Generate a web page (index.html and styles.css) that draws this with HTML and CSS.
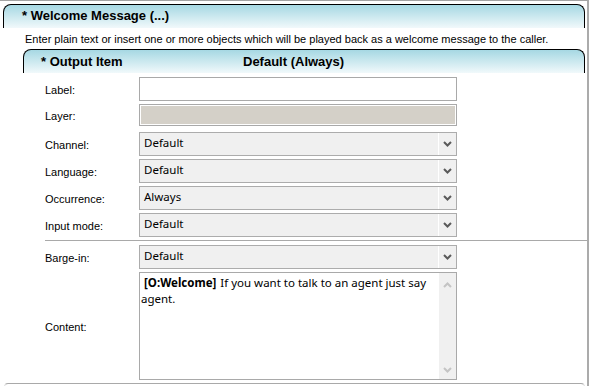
FILE: index.html
```html
<!DOCTYPE html>
<html>
<head>
<meta charset="utf-8">
<link rel="stylesheet" href="styles.css">
</head>
<body>
<div class="page">
  <div class="section">
    <div class="sec-head">* Welcome Message (...)</div>
    <div class="sec-desc">Enter plain text or insert one or more objects which will be played back as a welcome message to the caller.</div>
    <div class="panel">
      <div class="panel-head"><span class="ph-title">* Output Item</span><span>Default (Always)</span></div>
      <div class="form">
        <div class="row r24 gap3"><span class="lbl">Label:</span><div class="field text-input"></div></div>
        <div class="row r22 gap6"><span class="lbl">Layer:</span><div class="field layer-input"><div class="layer-fill"></div></div></div>
        <div class="row r24 gap3"><span class="lbl">Channel:</span><div class="field select"><span class="sel-val">Default</span><span class="sel-btn"><svg width="9" height="6" viewBox="0 0 9 6"><path d="M1 1 L4.5 4.5 L8 1" fill="none" stroke="#5a5a5a" stroke-width="2"/></svg></span></div></div>
        <div class="row r24 gap3"><span class="lbl">Language:</span><div class="field select"><span class="sel-val">Default</span><span class="sel-btn"><svg width="9" height="6" viewBox="0 0 9 6"><path d="M1 1 L4.5 4.5 L8 1" fill="none" stroke="#5a5a5a" stroke-width="2"/></svg></span></div></div>
        <div class="row r24 gap3"><span class="lbl">Occurrence:</span><div class="field select"><span class="sel-val">Always</span><span class="sel-btn"><svg width="9" height="6" viewBox="0 0 9 6"><path d="M1 1 L4.5 4.5 L8 1" fill="none" stroke="#5a5a5a" stroke-width="2"/></svg></span></div></div>
        <div class="row r24"><span class="lbl">Input mode:</span><div class="field select"><span class="sel-val">Default</span><span class="sel-btn"><svg width="9" height="6" viewBox="0 0 9 6"><path d="M1 1 L4.5 4.5 L8 1" fill="none" stroke="#5a5a5a" stroke-width="2"/></svg></span></div></div>
        <div class="sep"></div>
        <div class="row r24 gap3"><span class="lbl">Barge-in:</span><div class="field select"><span class="sel-val">Default</span><span class="sel-btn"><svg width="9" height="6" viewBox="0 0 9 6"><path d="M1 1 L4.5 4.5 L8 1" fill="none" stroke="#5a5a5a" stroke-width="2"/></svg></span></div></div>
        <div class="row r108"><span class="lbl">Content:</span>
          <div class="field textarea">
            <div class="ta-text">
              <div class="ta-line"><b class="obj">[O:Welcome]</b><span class="ta-rest">If you want to talk to an agent just say</span></div>
              <div class="ta-line">agent.</div>
            </div>
            <div class="ta-scroll">
              <svg width="9" height="6" viewBox="0 0 9 6"><path d="M1 5 L4.5 1.5 L8 5" fill="none" stroke="#c4c4c4" stroke-width="2"/></svg>
              <svg width="9" height="6" viewBox="0 0 9 6"><path d="M1 1 L4.5 4.5 L8 1" fill="none" stroke="#c4c4c4" stroke-width="2"/></svg>
            </div>
          </div>
        </div>
      </div>
    </div>
  </div>
  <div class="next-panel"></div>
</div>
</body>
</html>
```
FILE: styles.css
```css
html, body {
  margin: 0;
  padding: 0;
  background: #fff;
}
.page {
  width: 589px;
  height: 386px;
  box-sizing: border-box;
  border-top: 1px solid #a3a3a3;
  border-right: 2px solid #ababab;
  overflow: hidden;
  font-family: "Liberation Sans", Arial, sans-serif;
  color: #000;
}
.section {
  margin: 3px 2px 0 3px;
}
.sec-head {
  height: 24px;
  box-sizing: border-box;
  border: 1px solid #000;
  border-bottom: none;
  border-radius: 8px 8px 0 0;
  background: linear-gradient(#a6d8e3, #f1f9fb);
  font-weight: bold;
  font-size: 13px;
  line-height: 21px;
  padding-left: 18px;
}
.sec-desc {
  height: 21px;
  font-size: 11px;
  line-height: 22px;
  padding-left: 22px;
}
.panel {
  margin-left: 20px;
}
.panel-head {
  height: 24px;
  box-sizing: border-box;
  border: 1px solid #000;
  border-bottom: none;
  border-radius: 8px 8px 0 0;
  background: linear-gradient(#a6d8e3, #f1f9fb);
  font-weight: bold;
  font-size: 13px;
  line-height: 23px;
  padding-left: 17px;
  display: flex;
}
.ph-title {
  width: 202px;
}
.form {
  padding-top: 4px;
}
.row {
  display: flex;
  align-items: center;
}
.r24 { height: 24px; }
.r22 { height: 22px; }
.r108 { height: 108px; }
.gap3 { margin-bottom: 3px; }
.gap6 { margin-bottom: 6px; }
.lbl {
  width: 116px;
  box-sizing: border-box;
  padding-left: 22px;
  font-size: 11px;
  padding-top: 1px;
}
.field {
  width: 318px;
  height: 100%;
  box-sizing: border-box;
  border: 1px solid #abadb3;
}
.text-input {
  background: #fff;
  border-color: #a9a9a9;
}
.layer-input {
  background: #fff;
  padding: 1px;
  border-color: #a9a9a9;
}
.layer-fill {
  height: 100%;
  background: #d4d0c8;
}
.select {
  display: flex;
  background: #f0f0f0;
  border-color: #acacac;
  font-family: "Noto Sans", "Open Sans", sans-serif;
  font-size: 11.5px;
}
.sel-val {
  flex: 1;
  padding: 2px 0 0 4px;
  line-height: 15px;
}
.sel-btn {
  width: 17px;
  border-left: 1px solid #fff;
  display: flex;
  align-items: center;
  justify-content: center;
  padding-bottom: 1px;
}
.sep {
  height: 1px;
  background: #a9a9a9;
  margin: 3px -2px 4px 22px;
}
.textarea {
  display: flex;
  background: #fff;
  border-color: #a9a9a9;
  font-family: "Noto Sans", "Open Sans", sans-serif;
  font-size: 11.5px;
}
.ta-text {
  flex: 1;
  padding: 2px 2px 0 1px;
  line-height: 16px;
}
.ta-line {
  display: flex;
  gap: 4px;
}
.obj {
  padding-left: 3px;
}
.ta-scroll {
  width: 17px;
  background: #f0f0f0;
  display: flex;
  flex-direction: column;
  justify-content: space-between;
  align-items: center;
  padding: 9px 0 6px;
  box-sizing: border-box;
}
.next-panel {
  margin: 3px 2px 0 4px;
  height: 6px;
  border-top: 1px solid #a9a9a9;
  border-left: 1px solid #e0e0e0;
  border-right: 1px solid #e0e0e0;
  border-radius: 4px 4px 0 0;
}
```
